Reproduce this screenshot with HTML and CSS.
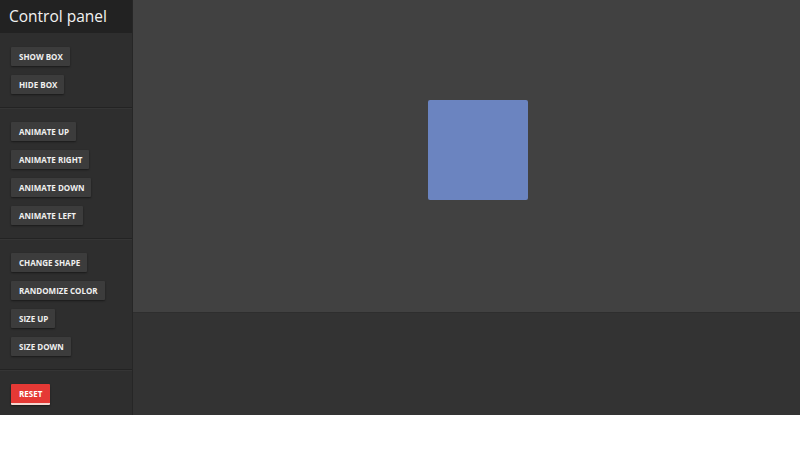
FILE: index.html
```html
<!DOCTYPE html>
<html>
<head>
<meta charset="utf-8">
<link rel="stylesheet" href="styles.css">
</head>
<body>
<div class="app">
  <aside class="sidebar">
    <h1 class="title">Control panel</h1>
    <div class="group">
      <button class="btn">SHOW BOX</button>
      <button class="btn">HIDE BOX</button>
    </div>
    <div class="group">
      <button class="btn">ANIMATE UP</button>
      <button class="btn">ANIMATE RIGHT</button>
      <button class="btn">ANIMATE DOWN</button>
      <button class="btn">ANIMATE LEFT</button>
    </div>
    <div class="group">
      <button class="btn">CHANGE SHAPE</button>
      <button class="btn">RANDOMIZE COLOR</button>
      <button class="btn">SIZE UP</button>
      <button class="btn">SIZE DOWN</button>
    </div>
    <div class="group last">
      <button class="btn reset">RESET</button>
    </div>
  </aside>
  <main class="main">
    <section class="stage">
      <div class="box"></div>
    </section>
    <section class="footer"></section>
  </main>
</div>
</body>
</html>
```

FILE: styles.css
```css
html, body {
  margin: 0;
  padding: 0;
  background: #ffffff;
  font-family: "Open Sans", "Liberation Sans", sans-serif;
}
.app {
  display: flex;
  width: 800px;
  height: 415px;
}
.sidebar {
  width: 132px;
  flex: none;
  background: #2e2e2e;
  border-right: 1px solid #262626;
  display: flex;
  flex-direction: column;
}
.title {
  margin: 0;
  height: 33px;
  box-sizing: border-box;
  background: #222222;
  color: #f2f2f2;
  font-weight: 400;
  font-size: 15.5px;
  line-height: 33px;
  padding-left: 9px;
}
.group {
  display: flex;
  flex-direction: column;
  align-items: flex-start;
  gap: 9px;
  padding: 14px 0 13px 11px;
  border-bottom: 1px solid #232323;
  box-shadow: 0 1px 0 #353535;
}
.group.last {
  border-bottom: none;
  box-shadow: none;
}
.btn {
  font-family: "Open Sans", "Liberation Sans", sans-serif;
  font-weight: 700;
  font-size: 8px;
  color: #f0f0f0;
  background: #3c3c3c;
  border: none;
  border-radius: 1px;
  height: 19px;
  padding: 0 7px 0 8px;
  margin: 0;
  box-shadow: 0 1px 2px rgba(0,0,0,0.45);
  cursor: pointer;
}
.btn.reset {
  background: #e53935;
  color: #fff;
  border-bottom: 2px solid #f4d6d0;
  height: 21px;
  padding: 0 8px;
}
.main {
  flex: 1;
  display: flex;
  flex-direction: column;
}
.stage {
  height: 312px;
  background: #414141;
  display: flex;
  justify-content: center;
  align-items: flex-start;
  padding-top: 100px;
  box-sizing: border-box;
}
.box {
  width: 100px;
  height: 100px;
  background: #6b84c0;
  border-radius: 2px;
  margin-left: 23px;
}
.footer {
  flex: 1;
  background: #333333;
  box-shadow: inset 0 1px 0 #2e2e2e;
}
```
